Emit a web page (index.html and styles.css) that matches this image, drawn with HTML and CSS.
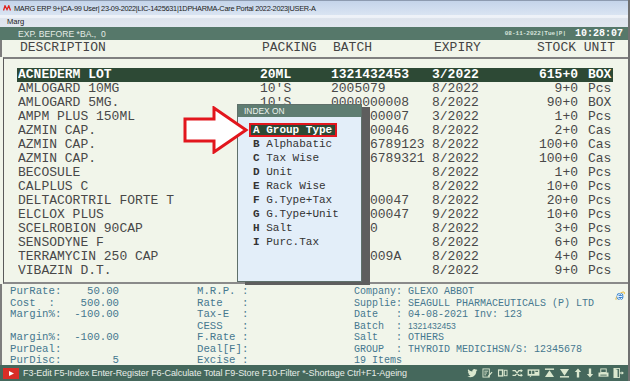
FILE: index.html
```html
<!DOCTYPE html>
<html>
<head>
<meta charset="utf-8">
<title>Marg ERP</title>
<link rel="stylesheet" href="styles.css">
</head>
<body>
<div class="window">
  <div class="titlebar">
    <svg class="logo" viewBox="0 0 8 6"><polyline points="0.5,5.5 2,0.8 4,4.5 5.8,0.8 7.5,5.5" fill="none" stroke="#e0201c" stroke-width="1.3"/></svg>
    <span class="title">MARG ERP 9+|CA-99 User| 23-09-2022|LIC-1425631|1DPHARMA-Care Portal 2022-2023|USER-A</span>
  </div>
  <div class="menubar">Marg</div>
  <div class="infobar">
    <span class="exp">EXP. BEFORE *BA.,&nbsp; 0</span>
    <span class="date">08-11-2022|Tue|P|</span>
    <span class="time">10:28:07</span>
  </div>
  <div class="content">
    <div class="row colhead">
      <span>DESCRIPTION</span><span>PACKING</span><span>BATCH</span><span>EXPIRY</span><span class="stockhead">STOCK UNIT</span>
    </div>
    <div class="list">
      <div class="row sel"><span>ACNEDERM LOT</span><span>20ML</span><span>1321432453</span><span>3/2022</span><span class="num">615+0</span><span class="unit">BOX</span></div>
      <div class="row"><span>AMLOGARD 10MG</span><span>10'S</span><span>2005079</span><span>8/2022</span><span class="num">9+0</span><span class="unit">Pcs</span></div>
      <div class="row"><span>AMLOGARD 5MG.</span><span>10'S</span><span>0000000008</span><span>8/2022</span><span class="num">90+0</span><span class="unit">BOX</span></div>
      <div class="row"><span>AMPM PLUS 150ML</span><span></span><span class="tail">00007</span><span>3/2022</span><span class="num">1+0</span><span class="unit">Pcs</span></div>
      <div class="row"><span>AZMIN CAP.</span><span></span><span class="tail">00046</span><span>8/2022</span><span class="num">2+0</span><span class="unit">Cas</span></div>
      <div class="row"><span>AZMIN CAP.</span><span></span><span class="tail">6789123</span><span>8/2022</span><span class="num">100+0</span><span class="unit">Cas</span></div>
      <div class="row"><span>AZMIN CAP.</span><span></span><span class="tail">6789321</span><span>8/2022</span><span class="num">100+0</span><span class="unit">Cas</span></div>
      <div class="row"><span>BECOSULE</span><span></span><span></span><span>8/2022</span><span class="num">1+0</span><span class="unit">Pcs</span></div>
      <div class="row"><span>CALPLUS C</span><span></span><span></span><span>8/2022</span><span class="num">10+0</span><span class="unit">Pcs</span></div>
      <div class="row"><span>DELTACORTRIL FORTE T</span><span></span><span class="tail">00047</span><span>8/2022</span><span class="num">20+0</span><span class="unit">Pcs</span></div>
      <div class="row"><span>ELCLOX PLUS</span><span></span><span class="tail">00047</span><span>9/2022</span><span class="num">10+0</span><span class="unit">Pcs</span></div>
      <div class="row"><span>SCELROBION 90CAP</span><span></span><span class="tail">0</span><span>8/2022</span><span class="num">3+0</span><span class="unit">Pcs</span></div>
      <div class="row"><span>SENSODYNE F</span><span></span><span></span><span>8/2022</span><span class="num">6+0</span><span class="unit">Pcs</span></div>
      <div class="row"><span>TERRAMYCIN 250 CAP</span><span></span><span class="tail">009A</span><span>8/2022</span><span class="num">4+0</span><span class="unit">Pcs</span></div>
      <div class="row"><span>VIBAZIN D.T.</span><span></span><span></span><span>8/2022</span><span class="num">9+0</span><span class="unit">Pcs</span></div>
    </div>
  </div>
  <div class="details">
<pre class="col c1">PurRate:    50.00
Cost  :    500.00
Margin%:  -100.00

Margin%:  -100.00
PurDeal:
PurDisc:        5</pre>
<pre class="col c2">M.R.P. :
Rate   :
Tax-E  :
CESS   :
F.Rate :
Deal[F]:
Excise :</pre>
<pre class="col c3">Company: GLEXO ABBOT
Supplie: SEAGULL PHARMACEUTICALS (P) LTD
Date   : 04-08-2021 Inv: 123
Batch  : <span class="sans">1321432453</span>
Salt   : OTHERS
GROUP  : THYROID MEDICIHSN/S: 12345678
19 Items</pre>
    <svg class="ie" viewBox="0 0 10 10">
      <path d="M1.2 8.8C0.2 7.6 2.5 3.5 6.5 1.6 9 0.4 10.2 1.2 9 3.2" fill="none" stroke="#e8b020" stroke-width="1"/>
      <circle cx="5" cy="5.4" r="3.4" fill="#2f7fd0"/>
      <rect x="2.6" y="4.9" width="4.8" height="1" fill="#fff"/>
      <path d="M7.2 6.9A2.5 2.5 0 1 1 7.3 4.3" fill="none" stroke="#fff" stroke-width="1"/>
    </svg>
  </div>
  <div class="statusbar">
    <span class="play"><svg viewBox="0 0 16 11"><polygon points="6,3 11,5.5 6,8" fill="#fff"/></svg></span>
    <span class="keys">F3-Edit F5-Index Enter-Register F6-Calculate Total F9-Store F10-Filter *-Shortage Ctrl+F1-Ageing</span>
    <span class="tools">
      <svg viewBox="0 0 12 11"><path d="M11.5 2.2c-.4.2-.8.3-1.3.4.5-.3.8-.7 1-1.2-.4.3-.9.4-1.4.5C9.4 1.4 8.8 1.1 8.1 1.1 6.8 1.1 5.8 2.2 5.8 3.4c0 .2 0 .4.1.5C4 3.8 2.3 2.9 1.2 1.5 1 1.9.9 2.3.9 2.7c0 .8.4 1.5 1 1.9-.4 0-.7-.1-1-.3 0 1.1.8 2 1.8 2.2-.3.1-.7.1-1 .1.3.9 1.1 1.5 2.1 1.6-.8.6-1.8 1-2.8 1H.4c1 .6 2.2 1 3.4 1 4.1 0 6.3-3.4 6.3-6.3v-.3c.6-.3 1-.8 1.4-1.3z" fill="#dbe8cf"/></svg>
      <svg viewBox="0 0 12 11"><rect x="1" y="1" width="7" height="9" fill="none" stroke="#dbe8cf" stroke-width="1"/><path d="M2.5 3.5h4M2.5 5.5h3M2.5 7.5h2" stroke="#dbe8cf"/><path d="M6 9l4.5-5 1 1L7 10z" fill="#dbe8cf"/></svg>
      <svg viewBox="0 0 12 11"><rect x="1" y="1.5" width="6" height="8" fill="#dbe8cf"/><rect x="2.3" y="3" width="3" height="5" fill="#45685c"/><rect x="8" y="2.5" width="3" height="6" fill="none" stroke="#dbe8cf"/></svg>
      <svg viewBox="0 0 12 11"><path d="M0.5 3h3l4 5h2.5M0.5 8h3l4-5h2.5" fill="none" stroke="#dbe8cf" stroke-width="1.4"/><polygon points="9.5,1 12,3 9.5,5" fill="#dbe8cf"/><polygon points="9.5,6 12,8 9.5,10" fill="#dbe8cf"/></svg>
      <svg class="wide" viewBox="0 0 14 11"><rect x="0.5" y="1.5" width="13" height="7" fill="#dbe8cf"/><rect x="2" y="3" width="2.5" height="3.5" fill="#45685c"/><rect x="5.5" y="3" width="2.5" height="3.5" fill="#45685c"/><rect x="9" y="3" width="3" height="1.3" fill="#45685c"/><polygon points="3,8.5 5,8.5 3,10.5" fill="#dbe8cf"/></svg>
      <svg viewBox="0 0 12 11"><rect x="1" y="0.5" width="10" height="1.6" fill="#dbe8cf"/><polygon points="6,2.5 11,10 1,10" fill="#dbe8cf"/></svg>
      <svg viewBox="0 0 12 11"><polygon points="1,1 11,1 6,8.5" fill="#dbe8cf"/><rect x="1" y="8.9" width="10" height="1.6" fill="#dbe8cf"/></svg>
      <svg class="narrow" viewBox="0 0 8 11"><polygon points="4,0.5 7.5,4.5 5.3,4.5 5.3,10.5 2.7,10.5 2.7,4.5 0.5,4.5" fill="#dbe8cf"/></svg>
      <svg class="narrow" viewBox="0 0 8 11"><polygon points="4,10.5 7.5,6.5 5.3,6.5 5.3,0.5 2.7,0.5 2.7,6.5 0.5,6.5" fill="#dbe8cf"/></svg>
      <svg viewBox="0 0 12 11"><rect x="3" y="1" width="6" height="4" fill="none" stroke="#dbe8cf"/><rect x="0.5" y="5" width="11" height="4.5" fill="#dbe8cf"/><rect x="2.5" y="7.3" width="7" height="1" fill="#45685c"/></svg>
      <svg viewBox="0 0 12 11"><rect x="1" y="0.5" width="6" height="10" fill="none" stroke="#dbe8cf"/><polygon points="1,0.5 5,2 5,10.8 1,10.5" fill="#dbe8cf"/><path d="M7 5.5h3.5" stroke="#dbe8cf" stroke-width="1.3"/><polygon points="9.5,3.5 12,5.5 9.5,7.5" fill="#dbe8cf"/></svg>
    </span>
  </div>

  <div class="popup">
    <div class="popup-title">INDEX ON</div>
    <ul class="menu">
      <li class="on"><b>A</b> Group Type</li>
      <li><b>B</b> Alphabatic</li>
      <li><b>C</b> Tax Wise</li>
      <li><b>D</b> Unit</li>
      <li><b>E</b> Rack Wise</li>
      <li><b>F</b> G.Type+Tax</li>
      <li><b>G</b> G.Type+Unit</li>
      <li><b>H</b> Salt</li>
      <li><b>I</b> Purc.Tax</li>
    </ul>
  </div>
  <svg class="arrow" viewBox="0 0 66 48"><polygon points="2,13 31,13 31,2 63,24 31,46 31,35 2,35" fill="#fff" stroke="#e2161d" stroke-width="3" stroke-linejoin="miter"/></svg>
</div>
</body>
</html>
```

FILE: styles.css
```css
* {
  box-sizing: border-box;
  margin: 0;
  padding: 0;
}

html,
body {
  width: 630px;
  height: 381px;
  overflow: hidden;
  background: #f1f5ea;
}

body {
  font-family: "Liberation Sans", Arial, sans-serif;
}

.window {
  position: relative;
  width: 630px;
  height: 381px;
  display: flex;
  flex-direction: column;
  background: #f1f5ea;
  border-right: 2px solid #707070;
}

/* title bar */
.titlebar {
  height: 15px;
  flex: none;
  display: flex;
  align-items: center;
  padding-left: 3px;
  background: linear-gradient(#c4d4ea, #d9e4f2);
  border-top: 1px solid #8d9bb0;
}

.logo {
  width: 8px;
  height: 6px;
  margin-right: 3px;
}

.title {
  font-size: 7.4px;
  letter-spacing: -0.3px;
  color: #1c1c1c;
  white-space: nowrap;
}

.menubar {
  height: 12px;
  flex: none;
  display: flex;
  align-items: center;
  padding-left: 7px;
  font-size: 7.6px;
  color: #222;
  background: linear-gradient(#eef2f8 0, #eef2f8 20%, #dde3ec 30%, #e2e7ef 100%);
}

.infobar {
  height: 13px;
  flex: none;
  display: flex;
  align-items: center;
  padding: 0 5px 0 18px;
  background: #56786a;
  color: #e4ece6;
}

.exp {
  flex: 1;
  font-size: 8.6px;
}

.date {
  font-family: "Liberation Mono", monospace;
  font-weight: bold;
  font-size: 6px;
  margin-right: 9px;
  color: #d8e4dc;
}

.time {
  font-family: "Liberation Mono", monospace;
  font-weight: bold;
  font-size: 10px;
  color: #fff;
}

/* grid list */
.content {
  flex: none;
  display: flex;
  flex-direction: column;
}

.row {
  display: grid;
  grid-template-columns: 242px 71px 101px 47px 99px 35px;
  height: 14px;
  line-height: 14px;
  padding-left: 1px;
  font-family: "Liberation Mono", monospace;
  font-size: 13px;
  color: #484848;
  white-space: nowrap;
}

.row span {
  overflow: hidden;
}

.row .tail {
  padding-left: 39px;
}

.row .num {
  text-align: right;
}

.row .unit {
  padding-left: 10px;
}

.colhead {
  height: 17px;
  line-height: 15px;
  padding-left: 18px;
  grid-template-columns: 242px 71px 101px 47px 134px;
  border-left: 2px solid #7d7d7d;
  color: #444;
}

.colhead span {
  overflow: visible;
}

.colhead .stockhead {
  text-align: right;
}

.list {
  height: 227px;
  margin-left: 3px;
  padding: 9px 15px 0 13px;
  border-top: 2px solid #808080;
  border-left: 1px solid #5a5a5a;
  border-bottom: 2px solid #8a8a8a;
}

.row.sel {
  background: #2d4935;
  color: #fff;
  font-weight: bold;
}

/* bottom details */
.details {
  height: 81px;
  flex: none;
  display: flex;
  padding: 2px 3px 0 8px;
  border-left: 2px solid #7d7d7d;
  color: #46788f;
}

.col {
  font-family: "Liberation Mono", monospace;
  font-size: 10.7px;
  line-height: 11.5px;
  white-space: pre;
}

.c1 {
  width: 187px;
}

.c2 {
  width: 157px;
}

.c3 {
  flex: 1;
  font-size: 10px;
}

.sans {
  font-family: "Liberation Sans", Arial, sans-serif;
  font-size: 8.6px;
}

.ie {
  width: 10px;
  height: 10px;
  margin-top: 5px;
  flex: none;
}

/* status bar */
.statusbar {
  height: 16px;
  flex: none;
  display: flex;
  align-items: center;
  background: #45685c;
  padding-left: 3px;
  padding-right: 4px;
}

.play {
  width: 16px;
  height: 11px;
  background: #d92d27;
  display: flex;
}

.play svg {
  width: 16px;
  height: 11px;
}

.keys {
  margin-left: 4px;
  font-size: 9px;
  color: #e8eee8;
  white-space: nowrap;
  letter-spacing: -0.06px;
}

.tools {
  margin-left: auto;
  display: flex;
  align-items: center;
  gap: 4px;
}

.tools svg {
  width: 11px;
  height: 10px;
}

.tools svg.wide {
  width: 13px;
}

.tools svg.narrow {
  width: 8px;
}

/* popup */
.popup {
  position: absolute;
  left: 237px;
  top: 104px;
  width: 125px;
  height: 178px;
  background: #e3eef9;
  border: 1px solid #5f706a;
  box-shadow: 8px 3px 0 #5e5e5e;
}

.popup-title {
  height: 12px;
  line-height: 12px;
  padding-left: 6px;
  background: #5f7d72;
  color: #eef3ef;
  font-size: 8.4px;
}

.menu {
  list-style: none;
  padding: 6px 0 0 11px;
  font-family: "Liberation Mono", monospace;
  font-size: 11px;
  color: #333;
}

.menu li {
  width: 88px;
  height: 14px;
  line-height: 10px;
  padding-left: 2px;
  border: 2px solid transparent;
  white-space: pre;
}

.menu li.on {
  background: #2d4935;
  border-color: #e3161e;
  color: #fff;
  font-weight: bold;
}

/* annotation arrow */
.arrow {
  position: absolute;
  left: 183px;
  top: 106px;
  width: 66px;
  height: 48px;
}
```
